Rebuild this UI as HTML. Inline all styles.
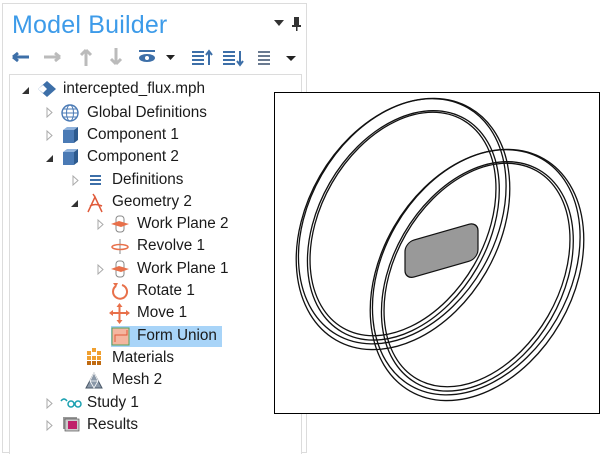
<!DOCTYPE html>
<html><head><meta charset="utf-8"><style>
*{margin:0;padding:0;box-sizing:border-box}
body{width:600px;height:440px;background:#fff;position:relative;overflow:hidden;font-family:"Liberation Sans",sans-serif}
.panel{position:absolute;left:2px;top:3px;width:305px;height:450px;border:1px solid #dcdcdc;background:#fff}
.tree{position:absolute;left:9px;top:74px;width:293px;height:380px;border:1px solid #dcdcdc;border-bottom:none;background:#fff}
.title{position:absolute;left:12px;top:11px;font-size:25px;color:#3d9be9;letter-spacing:0.2px}
.row{position:absolute;font-size:15.3px;color:#1a1a1a;white-space:nowrap;height:20px;line-height:20px}
.ic{position:absolute}
.box{position:absolute;left:274px;top:92px;width:326px;height:322px;border:1.5px solid #000;background:#fff}
</style></head><body>
<div class="panel"></div>
<div class="title">Model Builder</div>
<svg class="ic" style="left:0;top:0" width="310" height="75">
 <path d="M274 20 h10 l-5 6z" fill="#333"/>
 <rect x="294" y="17" width="5" height="8" fill="#333"/><rect x="292" y="25" width="9" height="2" fill="#333"/><rect x="296" y="27" width="1.5" height="4" fill="#333"/>
 <path d="M13 57 h16 M13 57 l5-4 M13 57 l5 4" stroke="#3d6fa8" stroke-width="3" fill="none"/>
 <path d="M44 57 h16 M60 57 l-5-4 M60 57 l-5 4" stroke="#bbb" stroke-width="3" fill="none"/>
 <path d="M86 66 v-16 M86 50 l-5 5 M86 50 l5 5" stroke="#bbb" stroke-width="3" fill="none"/>
 <path d="M116 48 v16 M116 64 l-5-5 M116 64 l5-5" stroke="#bbb" stroke-width="3" fill="none"/>
 <rect x="139" y="50" width="16" height="2" fill="#3d6fa8"/><ellipse cx="147" cy="58" rx="8" ry="4" fill="#3d6fa8"/><circle cx="147" cy="58" r="2" fill="#fff"/>
 <path d="M166 55 h9 l-4.5 5z" fill="#222"/>
 <g fill="#3d6fa8"><rect x="192" y="51" width="12" height="2"/><rect x="192" y="55" width="12" height="2"/><rect x="192" y="59" width="12" height="2"/><rect x="192" y="63" width="12" height="2"/><path d="M209 65 v-13 M206 55 l3-4 l3 4" stroke="#3d6fa8" stroke-width="2" fill="none"/></g>
 <g fill="#3d6fa8"><rect x="223" y="51" width="12" height="2"/><rect x="223" y="55" width="12" height="2"/><rect x="223" y="59" width="12" height="2"/><rect x="223" y="63" width="12" height="2"/><path d="M240 51 v13 M237 61 l3 4 l3-4" stroke="#3d6fa8" stroke-width="2" fill="none"/></g>
 <g fill="#6a7a90"><rect x="258" y="51" width="12" height="2"/><rect x="258" y="55" width="12" height="2"/><rect x="258" y="59" width="12" height="2"/><rect x="258" y="63" width="12" height="2"/></g>
 <path d="M286 56 h10 l-5 5z" fill="#222"/>
</svg>
<div class="tree"></div>
<div style="position:absolute;left:111px;top:326px;width:111px;height:21px;background:#a8d4f8"></div>
<svg class="ic" style="left:0;top:0" width="280" height="440">
 <path d="M22 94 l7-7 v7z" fill="#333"/>
 <g fill="none" stroke="#aaa"><path d="M47 108 l5 4.5 l-5 4.5z"/><path d="M47 131 l5 4.5 l-5 4.5z"/><path d="M73 176 l5 4.5 l-5 4.5z"/><path d="M98 220 l5 4.5 l-5 4.5z"/><path d="M98 265 l5 4.5 l-5 4.5z"/><path d="M47 399 l5 4.5 l-5 4.5z"/><path d="M47 421 l5 4.5 l-5 4.5z"/></g>
 <path d="M46 162 l7-7 v7z" fill="#333"/>
 <path d="M71 207 l7-7 v7z" fill="#333"/>
 <path d="M38 89 l9-8 l9 8 l-9 8z" fill="#3d6fa8"/><path d="M38 89 l5-4 l4 4 l-4 4z" fill="#fff"/>
 <circle cx="70" cy="113" r="8" fill="#fff" stroke="#4a7ab5" stroke-width="1.4"/><ellipse cx="70" cy="113" rx="3.5" ry="8" fill="none" stroke="#4a7ab5"/><path d="M62 113h16M63 109h14M63 117h14" stroke="#4a7ab5"/>
 <g>
  <path d="M63 130 l4-3 h11 l-4 3z" fill="#8fb2dc"/><path d="M74 130 l4-3 v13 l-4 3z" fill="#2d5a8e"/><rect x="63" y="130" width="11" height="13" fill="#4a7ab5"/>
  <path d="M63 152 l4-3 h11 l-4 3z" fill="#8fb2dc"/><path d="M74 152 l4-3 v13 l-4 3z" fill="#2d5a8e"/><rect x="63" y="152" width="11" height="13" fill="#4a7ab5"/>
 </g>
 <g fill="#3d6fa8"><rect x="90" y="175" width="11" height="2"/><rect x="90" y="179" width="11" height="2"/><rect x="90" y="183" width="11" height="2"/></g>
 <path d="M88 212 l7-15 l7 15 M90 206 q5-3 12 0 M95 197 l-2-3" stroke="#e05a3a" stroke-width="1.5" fill="none"/>
 <g stroke="#888" fill="#fff"><rect x="116" y="216" width="8" height="16" rx="3"/><rect x="116" y="261" width="8" height="16" rx="3"/></g>
 <g fill="#e8704a"><path d="M111 224 l8-3 l10 3 l-8 3z"/><path d="M111 269 l8-3 l10 3 l-8 3z"/></g>
 <path d="M120 239 v15" stroke="#888"/><ellipse cx="120" cy="247" rx="8" ry="2.5" fill="none" stroke="#e8704a" stroke-width="1.5"/>
 <path d="M116 286 a7 7 0 1 0 6 -1" stroke="#e8704a" stroke-width="2" fill="none"/><path d="M113 283 l5 0 l-2 4z" fill="#e8704a"/>
 <path d="M111 313 h17 M119.5 305 v17" stroke="#e8704a" stroke-width="2"/><path d="M109 313 l4-3 v6z M130 313 l-4-3 v6z M119.5 303 l-3 4 h6z M119.5 324 l-3-4 h6z" fill="#e8704a"/>
 <rect x="112" y="328" width="17" height="17" fill="#f4b6a0" stroke="#5aa05a"/><path d="M115 342 v-7 h12 v-5" stroke="#e05a3a" fill="none"/>
 <g fill="#f0a030"><rect x="87" y="351" width="4" height="4"/><rect x="92" y="348" width="4" height="4"/><rect x="97" y="351" width="4" height="4"/><rect x="87" y="356" width="4" height="4"/><rect x="92" y="356" width="4" height="4"/><rect x="97" y="356" width="4" height="4"/></g><g fill="#c06a10"><rect x="87" y="361" width="4" height="4"/><rect x="92" y="361" width="4" height="4"/><rect x="97" y="361" width="4" height="4"/></g>
 <path d="M86 388 l8-15 l8 15z" fill="#8a98a8" stroke="#4a5868"/><path d="M90 381 h8 M94 373 l-4 8 l4 7 l4-7z" stroke="#fff" stroke-width="0.8" fill="none"/>
 <path d="M61 401 q3-4 6 0" stroke="#1aa0b0" stroke-width="1.5" fill="none"/><circle cx="71" cy="404" r="3" fill="none" stroke="#1aa0b0" stroke-width="1.5"/><circle cx="78" cy="404" r="3" fill="none" stroke="#1aa0b0" stroke-width="1.5"/>
 <rect x="63" y="417" width="14" height="12" fill="#999"/><rect x="65" y="419" width="14" height="12" fill="#ccc" stroke="#555" stroke-width="0.7"/><rect x="68" y="421" width="9" height="8" fill="#c0206a"/>
</svg>
<div class="row" style="left:63px;top:79px">intercepted_flux.mph</div>
<div class="row" style="left:87px;top:103px">Global Definitions</div>
<div class="row" style="left:87px;top:125px">Component 1</div>
<div class="row" style="left:87px;top:147px">Component 2</div>
<div class="row" style="left:112px;top:170px">Definitions</div>
<div class="row" style="left:112px;top:192px">Geometry 2</div>
<div class="row" style="left:137px;top:214px">Work Plane 2</div>
<div class="row" style="left:137px;top:236px">Revolve 1</div>
<div class="row" style="left:137px;top:259px">Work Plane 1</div>
<div class="row" style="left:137px;top:281px">Rotate 1</div>
<div class="row" style="left:137px;top:303px">Move 1</div>
<div class="row" style="left:137px;top:326px">Form Union</div>
<div class="row" style="left:112px;top:348px">Materials</div>
<div class="row" style="left:112px;top:370px">Mesh 2</div>
<div class="row" style="left:87px;top:393px">Study 1</div>
<div class="row" style="left:87px;top:415px">Results</div>
<div class="box"></div>
<svg class="ic" style="left:0;top:0" width="600" height="440">
 <g fill="none" stroke="#111" stroke-width="1.3">
  <g transform="translate(403 224) rotate(-60)">
   <ellipse rx="134" ry="96"/><ellipse cx="2" cy="-2" rx="131" ry="93"/><ellipse cx="-1" cy="1" rx="123" ry="85"/><ellipse rx="120" ry="82"/>
  </g>
  <g transform="translate(477 275) rotate(-60)">
   <ellipse rx="134" ry="96"/><ellipse cx="2" cy="-2" rx="131" ry="93"/><ellipse cx="-1" cy="1" rx="123" ry="85"/><ellipse rx="120" ry="82"/>
  </g>
 </g>
 <g transform="translate(442 251) skewY(-16)">
  <rect x="-37" y="-19" width="73" height="37" rx="9" fill="#999" stroke="#111" stroke-width="1.2"/>
 </g>
</svg>
</body></html>
